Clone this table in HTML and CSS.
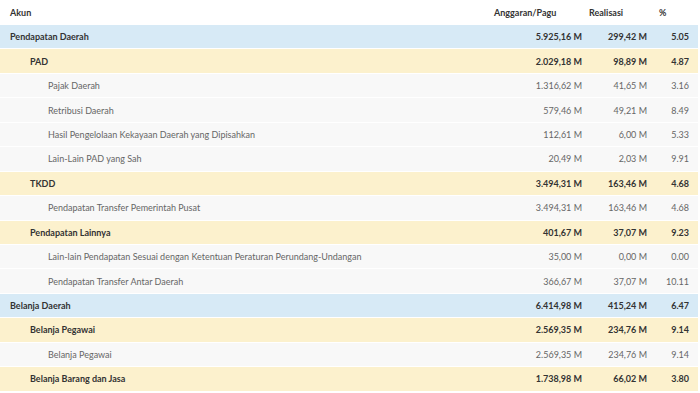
FILE: index.html
```html
<!DOCTYPE html>
<html lang="id">
<head>
<meta charset="utf-8">
<title>Anggaran</title>
<link rel="stylesheet" href="styles.css">
</head>
<body>
<div class="table">
  <div class="row head">
    <div class="c akun">Akun</div>
    <div class="c ang">Anggaran/Pagu</div>
    <div class="c real">Realisasi</div>
    <div class="c pct">%</div>
  </div>
  <div class="row l1">
    <div class="c akun">Pendapatan Daerah</div>
    <div class="c ang">5.925,16 M</div><div class="c real">299,42 M</div><div class="c pct">5.05</div>
  </div>
  <div class="row l2">
    <div class="c akun">PAD</div>
    <div class="c ang">2.029,18 M</div><div class="c real">98,89 M</div><div class="c pct">4.87</div>
  </div>
  <div class="row l3">
    <div class="c akun">Pajak Daerah</div>
    <div class="c ang">1.316,62 M</div><div class="c real">41,65 M</div><div class="c pct">3.16</div>
  </div>
  <div class="row l3">
    <div class="c akun">Retribusi Daerah</div>
    <div class="c ang">579,46 M</div><div class="c real">49,21 M</div><div class="c pct">8.49</div>
  </div>
  <div class="row l3">
    <div class="c akun">Hasil Pengelolaan Kekayaan Daerah yang Dipisahkan</div>
    <div class="c ang">112,61 M</div><div class="c real">6,00 M</div><div class="c pct">5.33</div>
  </div>
  <div class="row l3">
    <div class="c akun">Lain-Lain PAD yang Sah</div>
    <div class="c ang">20,49 M</div><div class="c real">2,03 M</div><div class="c pct">9.91</div>
  </div>
  <div class="row l2">
    <div class="c akun">TKDD</div>
    <div class="c ang">3.494,31 M</div><div class="c real">163,46 M</div><div class="c pct">4.68</div>
  </div>
  <div class="row l3">
    <div class="c akun">Pendapatan Transfer Pemerintah Pusat</div>
    <div class="c ang">3.494,31 M</div><div class="c real">163,46 M</div><div class="c pct">4.68</div>
  </div>
  <div class="row l2">
    <div class="c akun">Pendapatan Lainnya</div>
    <div class="c ang">401,67 M</div><div class="c real">37,07 M</div><div class="c pct">9.23</div>
  </div>
  <div class="row l3">
    <div class="c akun">Lain-lain Pendapatan Sesuai dengan Ketentuan Peraturan Perundang-Undangan</div>
    <div class="c ang">35,00 M</div><div class="c real">0,00 M</div><div class="c pct">0.00</div>
  </div>
  <div class="row l3">
    <div class="c akun">Pendapatan Transfer Antar Daerah</div>
    <div class="c ang">366,67 M</div><div class="c real">37,07 M</div><div class="c pct">10.11</div>
  </div>
  <div class="row l1">
    <div class="c akun">Belanja Daerah</div>
    <div class="c ang">6.414,98 M</div><div class="c real">415,24 M</div><div class="c pct">6.47</div>
  </div>
  <div class="row l2">
    <div class="c akun">Belanja Pegawai</div>
    <div class="c ang">2.569,35 M</div><div class="c real">234,76 M</div><div class="c pct">9.14</div>
  </div>
  <div class="row l3">
    <div class="c akun">Belanja Pegawai</div>
    <div class="c ang">2.569,35 M</div><div class="c real">234,76 M</div><div class="c pct">9.14</div>
  </div>
  <div class="row l2">
    <div class="c akun">Belanja Barang dan Jasa</div>
    <div class="c ang">1.738,98 M</div><div class="c real">66,02 M</div><div class="c pct">3.80</div>
  </div>
</div>
</body>
</html>
```

FILE: styles.css
```css
html, body {
  margin: 0;
  padding: 0;
  background: #ffffff;
}
body {
  font-family: Lato, "Noto Sans", sans-serif;
  font-size: 9px;
  color: #666666;
}
.table {
  width: 698px;
  display: flex;
  flex-direction: column;
}
.row {
  display: grid;
  grid-template-columns: 1fr 104px 64px 47px;
  height: 24.45px;
  box-sizing: border-box;
  border-top: 1.5px solid #ffffff;
  align-items: center;
}
.c {
  white-space: nowrap;
}
.akun {
  padding-left: 10px;
}
.ang {
  text-align: right;
  padding-right: 5px;
}
.real {
  text-align: right;
  padding-right: 4px;
}
.pct {
  text-align: right;
  padding-right: 9px;
}
.row.head {
  height: 24px;
  border-top: 0;
  background: #ffffff;
  color: #333333;
  font-weight: 700;
}
.head .ang {
  text-align: left;
  padding: 0 0 0 11px;
}
.head .real {
  text-align: left;
  padding: 0 0 0 2px;
}
.head .pct {
  text-align: left;
  padding: 0 0 0 8px;
}
.l1 {
  background: #d7eaf6;
  color: #333333;
  font-weight: 700;
}
.l2 {
  background: #fcf1cd;
  color: #333333;
  font-weight: 700;
}
.l2 .akun {
  padding-left: 30px;
}
.l3 {
  background: #f8f8f8;
  color: #666666;
}
.l3 .akun {
  padding-left: 48px;
}
```
